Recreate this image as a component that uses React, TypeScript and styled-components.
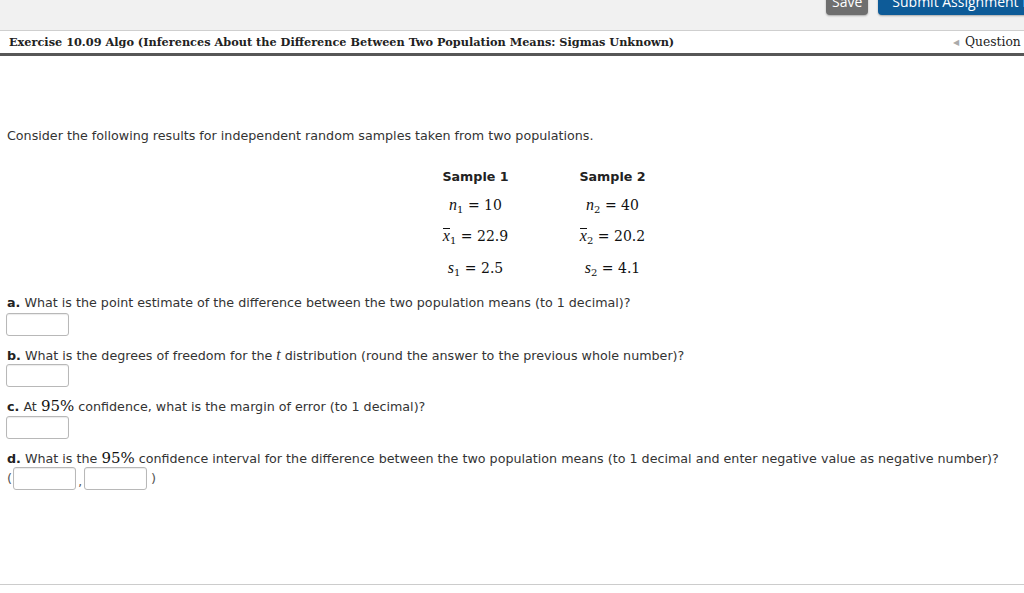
import React, { FC, ReactNode } from "react"
import styled, { createGlobalStyle } from "styled-components"

const GlobalStyle = createGlobalStyle`
    html, body {
        margin: 0;
        padding: 0;
        background: #ffffff;
    }
    body {
        width: 1024px;
        height: 593px;
        overflow: hidden;
        font-family: "DejaVu Sans", Verdana, sans-serif;
        color: #333333;
    }
`

const Page = styled.div`
    display: flex;
    flex-direction: column;
    width: 1024px;
    height: 593px;
    overflow: hidden;
`

const TopBar = styled.div`
    height: 30px;
    background: #f1f1f1;
    border-bottom: 1px solid #cfcfcf;
    display: flex;
    align-items: flex-start;
    gap: 10px;
    padding-left: 826px;
    overflow: hidden;
`

const ActionButton = styled.div<{ $primary?: boolean }>`
    flex-shrink: 0;
    margin-top: -11px;
    height: 26px;
    padding: 0 ${p => (p.$primary ? "14px" : "6px")};
    border-radius: 4px;
    background: ${p => (p.$primary ? "#0d5b98" : "#6f6f6f")};
    color: #ffffff;
    font-family: "Open Sans", sans-serif;
    font-size: 14px;
    line-height: 25px;
    white-space: nowrap;
    box-shadow: 0 1px 2px rgba(0, 0, 0, 0.3);
`

const HeaderRow = styled.div`
    height: 22px;
    border-bottom: 3px solid #575757;
    display: grid;
    grid-template-columns: 1fr 71px;
    align-items: center;
    padding: 0 0 0 9px;
    font-family: "DejaVu Serif", "Liberation Serif", serif;
    color: #222222;
    white-space: nowrap;
    overflow: hidden;
`

const Title = styled.div`
    font-weight: bold;
    font-size: 11.3px;
    overflow: hidden;
`

const QuestionNav = styled.div`
    display: flex;
    align-items: center;
    font-size: 12.3px;
    overflow: hidden;
`

const NavArrow = styled.span`
    display: inline-block;
    width: 12px;
    flex-shrink: 0;
    color: #aaaaaa;
    font-size: 8px;
`

const Content = styled.div`
    flex: 1;
    padding: 72px 0 0 7px;
    font-size: 12.7px;
    line-height: 16px;
`

const Intro = styled.p`
    margin: 0 0 25px 0;
`

const SampleTable = styled.div`
    display: grid;
    grid-template-columns: 137px 137px;
    margin-left: 400px;
`

const SampleHead = styled.div`
    font-weight: bold;
    text-align: center;
    color: #222222;
    height: 27px;
    line-height: 16px;
`

const MathCell = styled.div<{ $h: number }>`
    text-align: center;
    height: ${p => p.$h}px;
    font-family: "DejaVu Serif", "Liberation Serif", serif;
    font-size: 14px;
    color: #111111;
    line-height: 18px;
`

const Var = styled.i`
    font-family: "Liberation Serif", serif;
    font-size: 16px;
`

const Bar = styled.span`
    display: inline-block;
    border-top: 1px solid #111;
    line-height: 14px;
`

const Sub = styled.sub`
    font-size: 10px;
    vertical-align: -3px;
    line-height: 0;
`

const Question = styled.div`
    margin-top: 6px;
`

const Prompt = styled.div`
    height: 16px;
    white-space: nowrap;
`

const Letter = styled.b`
    color: #222222;
`

const Pct = styled.span`
    font-family: "DejaVu Serif", "Liberation Serif", serif;
    font-size: 15px;
    color: #111111;
`

const AnswerRow = styled.div`
    display: flex;
    align-items: center;
    margin: 1px 0 10.6px -1px;
    height: 24px;
`

const AnswerBox = styled.div`
    flex-shrink: 0;
    width: 61px;
    height: 21px;
    border: 1px solid #b8b8b8;
    border-radius: 3px;
    box-shadow: inset 0 1px 1px rgba(0, 0, 0, 0.08);
    background: #fff;
`

const Paren = styled.span<{ $left?: boolean }>`
    font-size: 13px;
    color: #555;
    padding: ${p => (p.$left ? "0 1px 0 1px" : "0 0 0 4px")};
`

const Comma = styled.span`
    font-size: 12px;
    color: #555;
    width: 8px;
    text-align: center;
    align-self: flex-end;
    line-height: 18px;
`

const Footer = styled.div`
    height: 8px;
    border-top: 1px solid #cccccc;
`

const Sym: FC<{ letter: string, idx: number, bar?: boolean }> = ({ letter, idx, bar }) => (
    <>
        {bar ? <Bar><Var>{letter}</Var></Bar> : <Var>{letter}</Var>}
        <Sub>{idx}</Sub>
    </>
)

const Prompted: FC<{ letter: string, children: ReactNode }> = ({ letter, children }) => (
    <Prompt>
        <Letter>{letter}.</Letter> {children}
    </Prompt>
)

const samples = [
    { n: 10, x: "22.9", s: "2.5" },
    { n: 40, x: "20.2", s: "4.1" },
]

export default function App() {
    return (
        <Page>
            <GlobalStyle />
            <TopBar>
                <ActionButton>Save</ActionButton>
                <ActionButton $primary>Submit Assignment for Grading</ActionButton>
            </TopBar>
            <HeaderRow>
                <Title>Exercise 10.09 Algo (Inferences About the Difference Between Two Population Means: Sigmas Unknown)</Title>
                <QuestionNav>
                    <NavArrow>◀</NavArrow>
                    <span>Question 9 of 9</span>
                </QuestionNav>
            </HeaderRow>
            <Content>
                <Intro>Consider the following results for independent random samples taken from two populations.</Intro>
                <SampleTable>
                    <SampleHead>Sample 1</SampleHead>
                    <SampleHead>Sample 2</SampleHead>
                    {samples.map((s, i) => (
                        <MathCell key={"n" + i} $h={31}><Sym letter="n" idx={i + 1} /> = {s.n}</MathCell>
                    ))}
                    {samples.map((s, i) => (
                        <MathCell key={"x" + i} $h={32}><Sym letter="x" idx={i + 1} bar /> = {s.x}</MathCell>
                    ))}
                    {samples.map((s, i) => (
                        <MathCell key={"s" + i} $h={30}><Sym letter="s" idx={i + 1} /> = {s.s}</MathCell>
                    ))}
                </SampleTable>
                <Question>
                    <Prompted letter="a">What is the point estimate of the difference between the two population means (to 1 decimal)?</Prompted>
                    <AnswerRow><AnswerBox /></AnswerRow>
                </Question>
                <Question>
                    <Prompted letter="b">What is the degrees of freedom for the <Var>t</Var> distribution (round the answer to the previous whole number)?</Prompted>
                    <AnswerRow><AnswerBox /></AnswerRow>
                </Question>
                <Question>
                    <Prompted letter="c">At <Pct>95%</Pct> confidence, what is the margin of error (to 1 decimal)?</Prompted>
                    <AnswerRow><AnswerBox /></AnswerRow>
                </Question>
                <Question>
                    <Prompted letter="d">What is the <Pct>95%</Pct> confidence interval for the difference between the two population means (to 1 decimal and enter negative value as negative number)?</Prompted>
                    <AnswerRow>
                        <Paren $left>(</Paren>
                        <AnswerBox />
                        <Comma>,</Comma>
                        <AnswerBox />
                        <Paren>)</Paren>
                    </AnswerRow>
                </Question>
            </Content>
            <Footer />
        </Page>
    )
}
